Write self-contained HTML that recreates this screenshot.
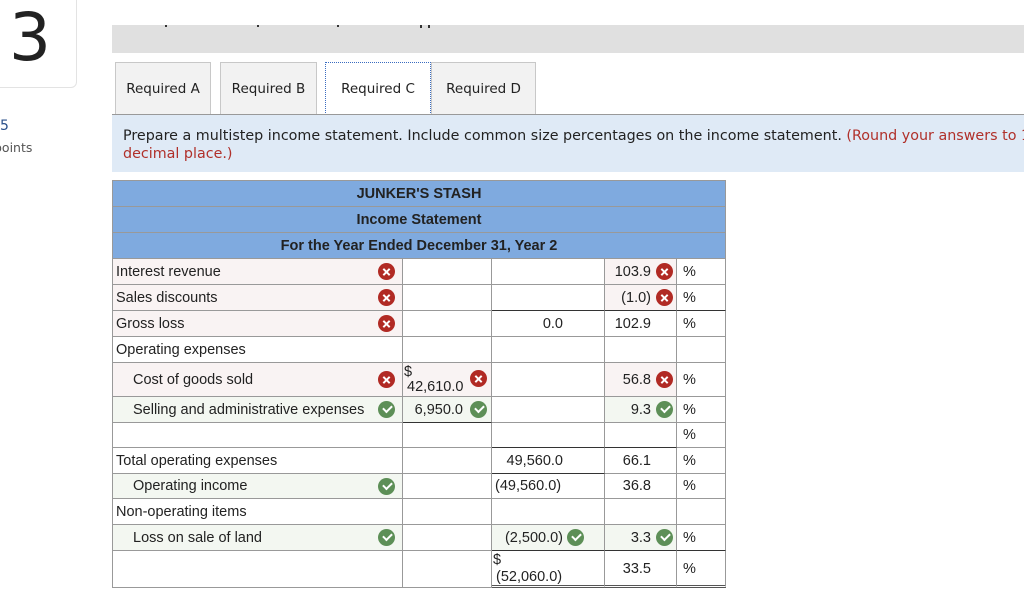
<!DOCTYPE html>
<html><head><meta charset="utf-8"><style>
body{margin:0;width:1024px;height:599px;position:relative;overflow:hidden;background:#fff;font-family:"Liberation Sans",Arial,sans-serif;}
.a{position:absolute;box-sizing:border-box;}
.c{position:absolute;box-sizing:border-box;border-right:1px solid #999;border-bottom:1px solid #999;font-size:14.5px;color:#222;line-height:1;}
.t{position:absolute;white-space:nowrap;}
.x,.k{position:absolute;width:17px;height:17px;border-radius:50%;}
.x{background:#b12a24;}
.k{background:#5d8f57;}
.x:before,.x:after{content:"";position:absolute;left:4px;top:7.5px;width:9px;height:2px;background:#fff;transform:rotate(45deg);}
.x:after{transform:rotate(-45deg);}
.k:before{content:"";position:absolute;left:5px;top:4px;width:7px;height:4px;border-left:2px solid #fff;border-bottom:2px solid #fff;transform:rotate(-45deg);}
.r{background:#f9f3f3;}
.g{background:#f3f7f1;}
.tab{position:absolute;top:62px;height:52px;background:#f2f2f2;border:1px solid #c8c8c8;border-bottom:none;font-family:"DejaVu Sans",Verdana,sans-serif;font-size:13.5px;color:#222;text-align:center;line-height:52px;box-sizing:border-box;}
.h{background:#7faadf;font-weight:bold;text-align:center;line-height:26px;}
</style></head><body>
<div class="a" style="left:-10px;top:-10px;width:87px;height:98px;border:1px solid #e3e3e3;border-radius:6px;"></div>
<div class="t" style="left:9px;top:1px;font-family:'DejaVu Sans',sans-serif;font-size:66px;color:#222;line-height:74px;">3</div>
<div class="t" style="left:0;top:118px;font-family:'DejaVu Sans',sans-serif;font-size:14px;color:#2a4f8a;">5</div>
<div class="t" style="left:-6px;top:140px;font-family:'DejaVu Sans',sans-serif;font-size:12.5px;color:#555;">points</div>

<div class="a" style="left:112px;top:25px;width:912px;height:28px;background:#e0e0e0;"></div>
<div class="a" style="left:165px;top:25px;width:2px;height:2px;background:#333"></div>
<div class="a" style="left:257px;top:25px;width:2px;height:2px;background:#333"></div>
<div class="a" style="left:337px;top:25px;width:2px;height:2px;background:#333"></div>
<div class="a" style="left:420px;top:25px;width:2px;height:3px;background:#333"></div>
<div class="a" style="left:428px;top:25px;width:2px;height:3px;background:#333"></div>

<div class="tab" style="left:115px;width:96px;">Required A</div>
<div class="tab" style="left:220px;width:97px;">Required B</div>
<div class="tab" style="left:325px;width:106px;background:#fff;border:1px dotted #3a6cc0;height:53px;">Required C</div>
<div class="tab" style="left:431px;width:105px;">Required D</div>
<div class="a" style="left:112px;top:114px;width:912px;height:1px;background:#999"></div>
<div class="a" style="left:112px;top:115px;width:912px;height:57px;background:#dfeaf6;"></div>
<div class="t" style="left:123px;top:127px;font-family:'DejaVu Sans',Verdana,sans-serif;font-size:14.3px;color:#222;line-height:19px;">Prepare a multistep income statement. Include common size percentages on the income statement. <span style="color:#b0302a">(Round your answers to 1</span></div>
<div class="t" style="left:123px;top:145px;font-family:'DejaVu Sans',Verdana,sans-serif;font-size:14.3px;color:#b0302a;line-height:19px;">decimal place.)</div>

<div class="a" style="left:112px;top:180px;width:614px;height:408px;border-left:1px solid #999;border-top:1px solid #999;"></div>
<div class="c h" style="left:113px;top:181px;width:613px;height:26px;">JUNKER'S STASH</div>
<div class="c h" style="left:113px;top:207px;width:613px;height:26px;">Income Statement</div>
<div class="c h" style="left:113px;top:233px;width:613px;height:26px;">For the Year Ended December 31, Year 2</div>

<!-- r1 -->
<div class="c r" style="left:113px;top:259px;width:290px;height:26px;"><span class="t" style="left:3px;top:6px">Interest revenue</span><i class="x" style="left:265px;top:4px"></i></div>
<div class="c" style="left:403px;top:259px;width:89px;height:26px;"></div>
<div class="c" style="left:492px;top:259px;width:113px;height:26px;"></div>
<div class="c r" style="left:605px;top:259px;width:72px;height:26px;"><span class="t" style="right:25px;top:6px">103.9</span><i class="x" style="left:51px;top:4px"></i></div>
<div class="c" style="left:677px;top:259px;width:49px;height:26px;"><span class="t" style="left:6px;top:6px">%</span></div>
<!-- r2 -->
<div class="c r" style="left:113px;top:285px;width:290px;height:26px;"><span class="t" style="left:3px;top:6px">Sales discounts</span><i class="x" style="left:265px;top:4px"></i></div>
<div class="c" style="left:403px;top:285px;width:89px;height:26px;"></div>
<div class="c" style="left:492px;top:285px;width:113px;height:26px;border-bottom:1px solid #333;"></div>
<div class="c r" style="left:605px;top:285px;width:72px;height:26px;border-bottom:1px solid #333;"><span class="t" style="right:25px;top:6px">(1.0)</span><i class="x" style="left:51px;top:4px"></i></div>
<div class="c" style="left:677px;top:285px;width:49px;height:26px;border-bottom:1px solid #333;"><span class="t" style="left:6px;top:6px">%</span></div>
<!-- r3 -->
<div class="c r" style="left:113px;top:311px;width:290px;height:26px;"><span class="t" style="left:3px;top:6px">Gross loss</span><i class="x" style="left:265px;top:4px"></i></div>
<div class="c" style="left:403px;top:311px;width:89px;height:26px;"></div>
<div class="c" style="left:492px;top:311px;width:113px;height:26px;"><span class="t" style="right:41px;top:6px">0.0</span></div>
<div class="c" style="left:605px;top:311px;width:72px;height:26px;"><span class="t" style="right:25px;top:6px">102.9</span></div>
<div class="c" style="left:677px;top:311px;width:49px;height:26px;"><span class="t" style="left:6px;top:6px">%</span></div>
<!-- r4 -->
<div class="c" style="left:113px;top:337px;width:290px;height:26px;"><span class="t" style="left:3px;top:6px">Operating expenses</span></div>
<div class="c" style="left:403px;top:337px;width:89px;height:26px;"></div>
<div class="c" style="left:492px;top:337px;width:113px;height:26px;"></div>
<div class="c" style="left:605px;top:337px;width:72px;height:26px;"></div>
<div class="c" style="left:677px;top:337px;width:49px;height:26px;"></div>
<!-- r5 -->
<div class="c r" style="left:113px;top:363px;width:290px;height:34px;"><span class="t" style="left:20px;top:10px">Cost of goods sold</span><i class="x" style="left:265px;top:8px"></i></div>
<div class="c r" style="left:403px;top:363px;width:89px;height:34px;"><span class="t" style="left:1px;top:2px">$</span><span class="t" style="left:4px;top:17px">42,610.0</span><i class="x" style="left:67px;top:7px"></i></div>
<div class="c" style="left:492px;top:363px;width:113px;height:34px;"></div>
<div class="c r" style="left:605px;top:363px;width:72px;height:34px;"><span class="t" style="right:25px;top:10px">56.8</span><i class="x" style="left:51px;top:8px"></i></div>
<div class="c" style="left:677px;top:363px;width:49px;height:34px;"><span class="t" style="left:6px;top:10px">%</span></div>
<!-- r6 -->
<div class="c g" style="left:113px;top:397px;width:290px;height:26px;"><span class="t" style="left:20px;top:6px">Selling and administrative expenses</span><i class="k" style="left:265px;top:4px"></i></div>
<div class="c g" style="left:403px;top:397px;width:89px;height:26px;border-bottom:1px solid #333;"><span class="t" style="right:28px;top:6px">6,950.0</span><i class="k" style="left:67px;top:4px"></i></div>
<div class="c" style="left:492px;top:397px;width:113px;height:26px;"></div>
<div class="c g" style="left:605px;top:397px;width:72px;height:26px;"><span class="t" style="right:25px;top:6px">9.3</span><i class="k" style="left:51px;top:4px"></i></div>
<div class="c" style="left:677px;top:397px;width:49px;height:26px;"><span class="t" style="left:6px;top:6px">%</span></div>
<!-- r7 -->
<div class="c" style="left:113px;top:423px;width:290px;height:25px;"></div>
<div class="c" style="left:403px;top:423px;width:89px;height:25px;"></div>
<div class="c" style="left:492px;top:423px;width:113px;height:25px;border-bottom:1px solid #333;"></div>
<div class="c" style="left:605px;top:423px;width:72px;height:25px;border-bottom:1px solid #333;"></div>
<div class="c" style="left:677px;top:423px;width:49px;height:25px;"><span class="t" style="left:6px;top:5px">%</span></div>
<!-- r8 -->
<div class="c" style="left:113px;top:448px;width:290px;height:26px;"><span class="t" style="left:3px;top:6px">Total operating expenses</span></div>
<div class="c" style="left:403px;top:448px;width:89px;height:26px;"></div>
<div class="c" style="left:492px;top:448px;width:113px;height:26px;border-bottom:1px solid #333;"><span class="t" style="right:41px;top:6px">49,560.0</span></div>
<div class="c" style="left:605px;top:448px;width:72px;height:26px;"><span class="t" style="right:25px;top:6px">66.1</span></div>
<div class="c" style="left:677px;top:448px;width:49px;height:26px;"><span class="t" style="left:6px;top:6px">%</span></div>
<!-- r9 -->
<div class="c g" style="left:113px;top:474px;width:290px;height:25px;"><span class="t" style="left:20px;top:5px">Operating income</span><i class="k" style="left:265px;top:4px"></i></div>
<div class="c" style="left:403px;top:474px;width:89px;height:25px;"></div>
<div class="c" style="left:492px;top:474px;width:113px;height:25px;"><span class="t" style="left:3px;top:5px">(49,560.0)</span></div>
<div class="c" style="left:605px;top:474px;width:72px;height:25px;"><span class="t" style="right:25px;top:5px">36.8</span></div>
<div class="c" style="left:677px;top:474px;width:49px;height:25px;"><span class="t" style="left:6px;top:5px">%</span></div>
<!-- r10 -->
<div class="c" style="left:113px;top:499px;width:290px;height:26px;"><span class="t" style="left:3px;top:6px">Non-operating items</span></div>
<div class="c" style="left:403px;top:499px;width:89px;height:26px;"></div>
<div class="c" style="left:492px;top:499px;width:113px;height:26px;"></div>
<div class="c" style="left:605px;top:499px;width:72px;height:26px;"></div>
<div class="c" style="left:677px;top:499px;width:49px;height:26px;"></div>
<!-- r11 -->
<div class="c g" style="left:113px;top:525px;width:290px;height:26px;"><span class="t" style="left:20px;top:6px">Loss on sale of land</span><i class="k" style="left:265px;top:4px"></i></div>
<div class="c" style="left:403px;top:525px;width:89px;height:26px;"></div>
<div class="c g" style="left:492px;top:525px;width:113px;height:26px;border-bottom:1px solid #333;"><span class="t" style="right:41px;top:6px">(2,500.0)</span><i class="k" style="left:75px;top:4px"></i></div>
<div class="c g" style="left:605px;top:525px;width:72px;height:26px;border-bottom:1px solid #333;"><span class="t" style="right:25px;top:6px">3.3</span><i class="k" style="left:51px;top:4px"></i></div>
<div class="c" style="left:677px;top:525px;width:49px;height:26px;border-bottom:1px solid #333;"><span class="t" style="left:6px;top:6px">%</span></div>
<!-- r12 -->
<div class="c" style="left:113px;top:551px;width:290px;height:37px;"></div>
<div class="c" style="left:403px;top:551px;width:89px;height:37px;"></div>
<div class="c" style="left:492px;top:551px;width:113px;height:37px;border-bottom:3px double #555;"><span class="t" style="left:1px;top:2px">$</span><span class="t" style="left:4px;top:19px">(52,060.0)</span></div>
<div class="c" style="left:605px;top:551px;width:72px;height:37px;border-bottom:3px double #555;"><span class="t" style="right:25px;top:11px">33.5</span></div>
<div class="c" style="left:677px;top:551px;width:49px;height:37px;border-bottom:3px double #555;"><span class="t" style="left:6px;top:11px">%</span></div>
</body></html>
